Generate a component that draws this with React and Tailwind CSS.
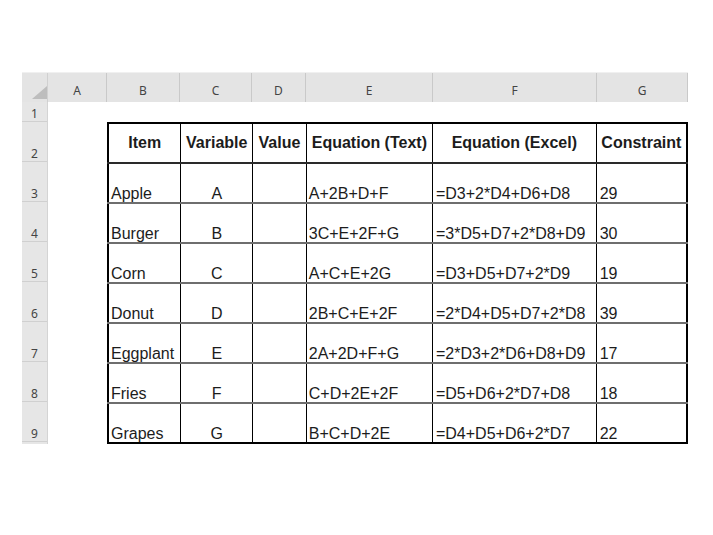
import React from "react";

const cols = [
  { l: "A", w: "w-[59px]" },
  { l: "B", w: "w-[73px]" },
  { l: "C", w: "w-[72px]" },
  { l: "D", w: "w-[54px]" },
  { l: "E", w: "w-[127px]" },
  { l: "F", w: "w-[164px]" },
  { l: "G", w: "w-[91px]" },
];

const rows = [
  ["Apple", "A", "A+2B+D+F", "=D3+2*D4+D6+D8", "29"],
  ["Burger", "B", "3C+E+2F+G", "=3*D5+D7+2*D8+D9", "30"],
  ["Corn", "C", "A+C+E+2G", "=D3+D5+D7+2*D9", "19"],
  ["Donut", "D", "2B+C+E+2F", "=2*D4+D5+D7+2*D8", "39"],
  ["Eggplant", "E", "2A+2D+F+G", "=2*D3+2*D6+D8+D9", "17"],
  ["Fries", "F", "C+D+2E+2F", "=D5+D6+2*D7+D8", "18"],
  ["Grapes", "G", "B+C+D+2E", "=D4+D5+D6+2*D7", "22"],
];

export default function App() {
  return (
    <div className="w-[713px] h-[535px] bg-white overflow-hidden">
      <div className="ml-[22px] pt-[72px] w-[666px]">
        {/* column header */}
        <div className="flex h-[30px] bg-[#e4e4e4] border-t border-[#f0f0f0]">
          <div className="w-[26px] relative border-r border-[#d0d0d0]">
            <svg className="absolute left-[10px] top-[13px]" width="15" height="13" viewBox="0 0 15 13">
              <polygon points="15,0 15,13 0,13" fill="#bdbdbd" />
            </svg>
          </div>
          {cols.map((c) => (
            <div
              key={c.l}
              className={`${c.w} flex items-end justify-center pb-[5px] border-r border-[#c9c9c9] text-[12px] text-[#444] [font-family:'Noto_Sans',sans-serif] leading-none`}
            >
              {c.l}
            </div>
          ))}
        </div>
        <div className="flex">
          {/* row header */}
          <div className="w-[26px] flex flex-col bg-[#e6e6e6] border-r border-[#d4d4d4] text-[12px] text-[#444] [font-family:'Noto_Sans',sans-serif] leading-none">
            <div className="h-[20px] flex items-end justify-center pb-[1px] border-b border-[#d0d0d0]">1</div>
            {[2, 3, 4, 5, 6, 7, 8, 9].map((n) => (
              <div key={n} className="h-[40px] flex items-end justify-center pb-[1px] border-b border-[#d0d0d0]">
                {n}
              </div>
            ))}
          </div>
          {/* sheet body */}
          <div className="flex-1">
            <div className="h-[20px]" />
            <div className="ml-[59px]">
              <table className="border-collapse border-2 border-black text-[16px] text-[#1c1c1c] [font-family:'Liberation_Sans',Arial,sans-serif] leading-[16px]">
                <colgroup>
                  <col className="w-[73px]" />
                  <col className="w-[72px]" />
                  <col className="w-[54px]" />
                  <col className="w-[127px]" />
                  <col className="w-[164px]" />
                  <col className="w-[91px]" />
                </colgroup>
                <thead>
                  <tr className="h-[40px] border-b-2 border-[#2a2a2a]">
                    {["Item", "Variable", "Value", "Equation (Text)", "Equation (Excel)", "Constraint"].map((h) => (
                      <th key={h} className="border-x border-black p-0 text-center align-middle font-bold">
                        {h}
                      </th>
                    ))}
                  </tr>
                </thead>
                <tbody>
                  {rows.map((r, i) => (
                    <tr key={i} className={`h-[40px] ${i < rows.length - 1 ? "border-b-2 border-[#6e6e6e]" : ""}`}>
                      <td className="border-x border-black px-[2px] pb-0 align-bottom text-left">{r[0]}</td>
                      <td className="border-x border-black pb-0 align-bottom text-center">{r[1]}</td>
                      <td className="border-x border-black pb-0 align-bottom"></td>
                      <td className="border-x border-black px-[2px] pb-0 align-bottom text-left">{r[2]}</td>
                      <td className="border-x border-black px-[3px] pb-0 align-bottom text-left">{r[3]}</td>
                      <td className="border-x border-black px-[3px] pb-0 align-bottom text-left">{r[4]}</td>
                    </tr>
                  ))}
                </tbody>
              </table>
            </div>
          </div>
        </div>
      </div>
    </div>
  );
}
